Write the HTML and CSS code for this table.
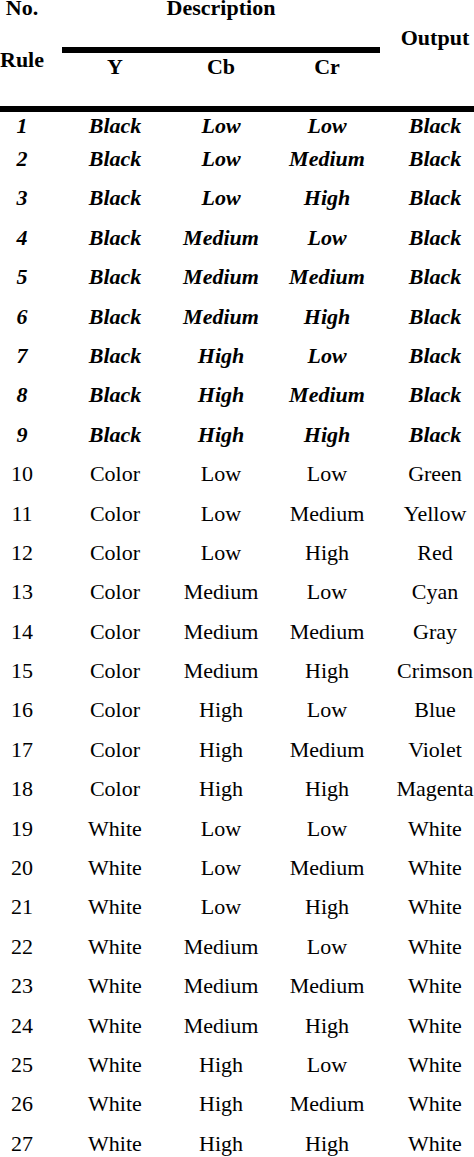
FILE: index.html
```html
<!DOCTYPE html>
<html>
<head>
<meta charset="utf-8">
<link rel="stylesheet" href="styles.css">
</head>
<body>
<div class="table">
  <div class="head">
    <div class="h-left">
      <div class="h-no">No.</div>
      <div class="h-rule">Rule</div>
    </div>
    <div class="h-desc">
      <div class="h-title">Description</div>
      <div class="h-line"></div>
      <div class="h-sub">
        <div class="cell">Y</div>
        <div class="cell">Cb</div>
        <div class="cell">Cr</div>
      </div>
    </div>
    <div class="h-out">Output</div>
  </div>
  <div class="body">
    <div class="row emph first"><div class="c-no">1</div><div class="cell">Black</div><div class="cell">Low</div><div class="cell">Low</div><div class="c-out">Black</div></div>
    <div class="row emph"><div class="c-no">2</div><div class="cell">Black</div><div class="cell">Low</div><div class="cell">Medium</div><div class="c-out">Black</div></div>
    <div class="row emph"><div class="c-no">3</div><div class="cell">Black</div><div class="cell">Low</div><div class="cell">High</div><div class="c-out">Black</div></div>
    <div class="row emph"><div class="c-no">4</div><div class="cell">Black</div><div class="cell">Medium</div><div class="cell">Low</div><div class="c-out">Black</div></div>
    <div class="row emph"><div class="c-no">5</div><div class="cell">Black</div><div class="cell">Medium</div><div class="cell">Medium</div><div class="c-out">Black</div></div>
    <div class="row emph"><div class="c-no">6</div><div class="cell">Black</div><div class="cell">Medium</div><div class="cell">High</div><div class="c-out">Black</div></div>
    <div class="row emph"><div class="c-no">7</div><div class="cell">Black</div><div class="cell">High</div><div class="cell">Low</div><div class="c-out">Black</div></div>
    <div class="row emph"><div class="c-no">8</div><div class="cell">Black</div><div class="cell">High</div><div class="cell">Medium</div><div class="c-out">Black</div></div>
    <div class="row emph"><div class="c-no">9</div><div class="cell">Black</div><div class="cell">High</div><div class="cell">High</div><div class="c-out">Black</div></div>
    <div class="row"><div class="c-no">10</div><div class="cell">Color</div><div class="cell">Low</div><div class="cell">Low</div><div class="c-out">Green</div></div>
    <div class="row"><div class="c-no">11</div><div class="cell">Color</div><div class="cell">Low</div><div class="cell">Medium</div><div class="c-out">Yellow</div></div>
    <div class="row"><div class="c-no">12</div><div class="cell">Color</div><div class="cell">Low</div><div class="cell">High</div><div class="c-out">Red</div></div>
    <div class="row"><div class="c-no">13</div><div class="cell">Color</div><div class="cell">Medium</div><div class="cell">Low</div><div class="c-out">Cyan</div></div>
    <div class="row"><div class="c-no">14</div><div class="cell">Color</div><div class="cell">Medium</div><div class="cell">Medium</div><div class="c-out">Gray</div></div>
    <div class="row"><div class="c-no">15</div><div class="cell">Color</div><div class="cell">Medium</div><div class="cell">High</div><div class="c-out">Crimson</div></div>
    <div class="row"><div class="c-no">16</div><div class="cell">Color</div><div class="cell">High</div><div class="cell">Low</div><div class="c-out">Blue</div></div>
    <div class="row"><div class="c-no">17</div><div class="cell">Color</div><div class="cell">High</div><div class="cell">Medium</div><div class="c-out">Violet</div></div>
    <div class="row"><div class="c-no">18</div><div class="cell">Color</div><div class="cell">High</div><div class="cell">High</div><div class="c-out">Magenta</div></div>
    <div class="row"><div class="c-no">19</div><div class="cell">White</div><div class="cell">Low</div><div class="cell">Low</div><div class="c-out">White</div></div>
    <div class="row"><div class="c-no">20</div><div class="cell">White</div><div class="cell">Low</div><div class="cell">Medium</div><div class="c-out">White</div></div>
    <div class="row"><div class="c-no">21</div><div class="cell">White</div><div class="cell">Low</div><div class="cell">High</div><div class="c-out">White</div></div>
    <div class="row"><div class="c-no">22</div><div class="cell">White</div><div class="cell">Medium</div><div class="cell">Low</div><div class="c-out">White</div></div>
    <div class="row"><div class="c-no">23</div><div class="cell">White</div><div class="cell">Medium</div><div class="cell">Medium</div><div class="c-out">White</div></div>
    <div class="row"><div class="c-no">24</div><div class="cell">White</div><div class="cell">Medium</div><div class="cell">High</div><div class="c-out">White</div></div>
    <div class="row"><div class="c-no">25</div><div class="cell">White</div><div class="cell">High</div><div class="cell">Low</div><div class="c-out">White</div></div>
    <div class="row"><div class="c-no">26</div><div class="cell">White</div><div class="cell">High</div><div class="cell">Medium</div><div class="c-out">White</div></div>
    <div class="row"><div class="c-no">27</div><div class="cell">White</div><div class="cell">High</div><div class="cell">High</div><div class="c-out">White</div></div>
  </div>
</div>
</body>
</html>
```
FILE: styles.css
```css
html, body {
  margin: 0;
  padding: 0;
  background: #fff;
}

body {
  font-family: "Liberation Serif", "Times New Roman", serif;
  font-size: 22px;
  color: #000;
  overflow: hidden;
}

.table {
  width: 474px;
}

.head {
  display: flex;
  height: 106px;
  border-bottom: 6px solid #000;
  font-weight: bold;
}

.h-left {
  width: 62px;
  padding-right: 18px;
  box-sizing: border-box;
  display: flex;
  flex-direction: column;
  align-items: center;
}

.h-no {
  line-height: 15px;
}

.h-rule {
  line-height: 24px;
  margin-top: 33px;
}

.h-desc {
  width: 318px;
  display: flex;
  flex-direction: column;
}

.h-title {
  line-height: 15px;
  text-align: center;
}

.h-line {
  margin-top: 32px;
  height: 5.5px;
  background: #000;
}

.h-sub {
  display: flex;
  margin-top: 2px;
  line-height: 24px;
}

.h-out {
  width: 94px;
  padding-left: 16px;
  padding-top: 25.6px;
  box-sizing: border-box;
  line-height: 24px;
  text-align: center;
}

.row {
  display: flex;
  height: 39.4px;
  line-height: 39.4px;
}

.row.first {
  height: 27px;
  line-height: 27px;
}

.row.emph {
  font-weight: bold;
  font-style: italic;
}

.cell {
  width: 106px;
  display: flex;
  justify-content: center;
  white-space: nowrap;
}

.c-no {
  width: 62px;
  padding-right: 18px;
  box-sizing: border-box;
  display: flex;
  justify-content: center;
  white-space: nowrap;
}

.c-out {
  width: 94px;
  padding-left: 16px;
  box-sizing: border-box;
  display: flex;
  justify-content: center;
  white-space: nowrap;
}
```
